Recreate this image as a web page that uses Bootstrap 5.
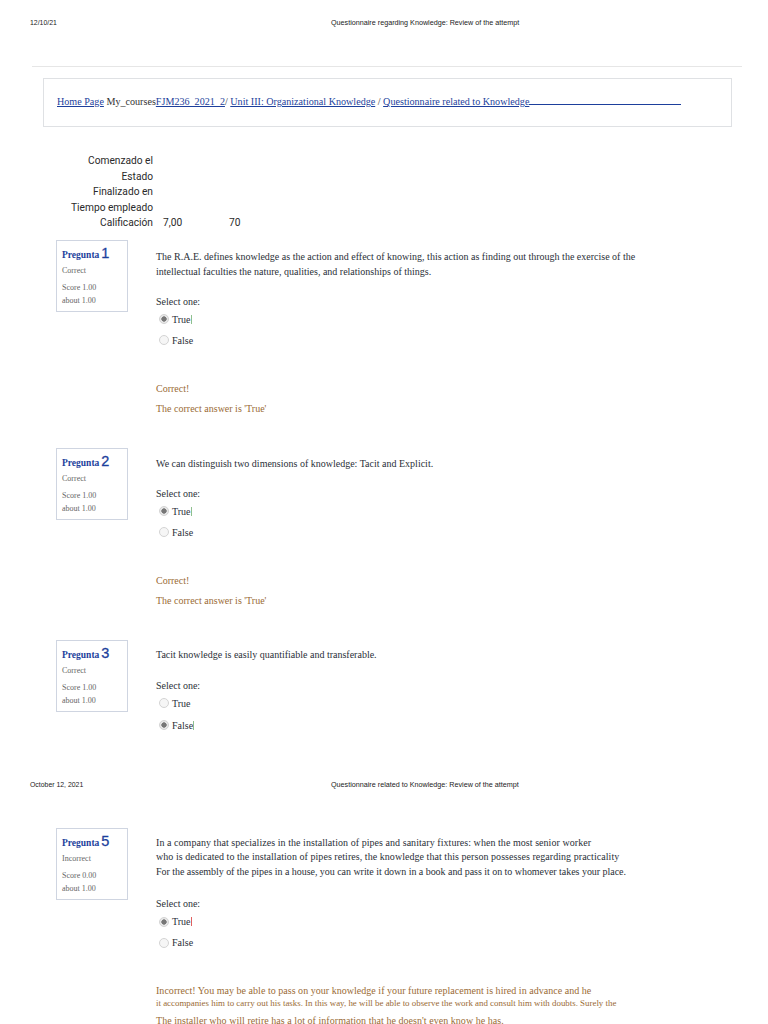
<!DOCTYPE html>
<html lang="en">
<head>
<meta charset="utf-8">
<title>Questionnaire</title>
<link href="https://cdn.jsdelivr.net/npm/bootstrap@5.3.0/dist/css/bootstrap.min.css" rel="stylesheet">
<style>
html,body{height:1024px;overflow:hidden;background:#fff}
body{font-family:"Liberation Serif",serif;font-size:10px;line-height:15px;color:#2b3038;position:relative}
.runhead{font-family:"Liberation Sans",sans-serif;font-size:6.9px;line-height:10px;color:#222;padding:0 30px;height:10px}
.runhead .rh-title{position:absolute;left:331px;font-size:7.2px}
.page-a{padding-top:18px}
.rule{height:1px;background:#e6e6e6;margin:38px 26px 0 32px}
.crumbbox{margin:11px 36px 0 43px;height:49px;border:1px solid #dfe1e4;padding:15px 13px 0}
.crumbs{font-size:10.12px;line-height:14px;color:#333;white-space:nowrap}
.crumbs a{color:#1d3f9c;text-decoration:underline}
.crumbs .tail{display:inline-block;width:152px;border-bottom:1px solid #1d3f9c;height:11px}
.summary{margin:26px 0 0 60px;font-family:Roboto,sans-serif;font-size:10.2px;line-height:15.5px;color:#2a2a2a;display:grid;grid-template-columns:93px 66px 40px}
.summary .lbl{text-align:right}
.summary .val{padding-left:10px}
.qrow{display:flex;margin-left:56px}
.qinfo{flex:0 0 72px;height:72px;border:1px solid #cfd5e1;padding:4px 5px;font-size:8px;line-height:12.5px;color:#666}
.qname{display:flex;align-items:baseline;gap:2px;font-size:9.5px;font-weight:700;color:#1d3f9c;line-height:17px;margin-bottom:1px}
.qname b{font-family:"Liberation Sans",sans-serif;font-size:14.5px;font-weight:400;-webkit-text-stroke:.3px #1d3f9c}
.qstate{margin-bottom:5px}
.qbody{margin-left:28px;flex:1}
.qtext{margin:0;padding-top:9px;white-space:nowrap}
.qsel{margin:15px 0 0}
.opt{display:flex;align-items:center;gap:3px;height:15px;margin-left:3px;margin-top:6px;color:#2b3038}
.opt:first-of-type{margin-top:3px}
.opt input.form-check-input{width:10px;height:10px;margin:0;border-color:#d4d4d4;background-color:#f6f6f6;float:none;flex:none}
.opt input.form-check-input:checked{background-color:#eee;background-image:radial-gradient(circle,#777 0,#777 42%,#e8e8e8 52%);border-color:#d4d4d4}
.opt .mark-g{border-right:1px solid #8fbf8f;height:9px;margin-left:-3px}
.opt .mark-r{border-right:1px solid #e06060;height:9px;margin-left:-3px}
.fb{color:#9a6b35;margin:0}
.fb1{margin-top:33px}
.fb2{margin-top:5px}
.q1{margin-top:9px}
.q2{margin-top:32px}
.q2 .qtext{padding-top:8px}
.q3{margin-top:32px}
.q3 .qtext{padding-top:7px}
.q3 .qsel{margin-top:16px}
.q3 .opt:last-child{margin-top:7px}
.page-b{margin-top:47px}
.q5{margin-top:38px}
.q5 .qtext{padding-top:8px;line-height:14.5px}
.q5 .qsel{margin-top:17px}
.fb-l{white-space:nowrap;margin:0;color:#9a6b35}
.fb-first{margin-top:35px;line-height:12px;letter-spacing:.03px}
.fb-s{font-size:8.9px;line-height:12px}
.fb-last{margin-top:5px;line-height:14px;letter-spacing:.04px}
.wide{letter-spacing:.05px}
.narrow{letter-spacing:-.04px}
</style>
</head>
<body>
<div class="page-a">
  <div class="runhead"><span>12/10/21</span><span class="rh-title">Questionnaire regarding Knowledge: Review of the attempt</span></div>
  <div class="rule"></div>
  <div class="crumbbox">
    <div class="crumbs"><a href="#">Home Page</a> My_courses<a href="#">FJM236_2021_2</a>/ <a href="#">Unit III: Organizational Knowledge</a> / <a href="#">Questionnaire related to Knowledge</a><span class="tail"></span></div>
  </div>
  <div class="summary">
    <div class="lbl">Comenzado el</div><div></div><div></div>
    <div class="lbl">Estado</div><div></div><div></div>
    <div class="lbl">Finalizado en</div><div></div><div></div>
    <div class="lbl">Tiempo empleado</div><div></div><div></div>
    <div class="lbl">Calificación</div><div class="val">7,00</div><div class="val">70</div>
  </div>

  <div class="qrow q1">
    <div class="qinfo"><div class="qname">Pregunta <b>1</b></div><div class="qstate">Correct</div><div>Score 1.00</div><div>about 1.00</div></div>
    <div class="qbody">
      <p class="qtext">The R.A.E. defines knowledge as the action and effect of knowing, this action as finding out through the exercise of the<br>intellectual faculties the nature, qualities, and relationships of things.</p>
      <p class="qsel">Select one:</p>
      <label class="opt"><input class="form-check-input" type="radio" name="a1" checked><span>True</span><span class="mark-g"></span></label>
      <label class="opt"><input class="form-check-input" type="radio" name="a1"><span>False</span></label>
      <p class="fb fb1">Correct!</p>
      <p class="fb fb2">The correct answer is 'True'</p>
    </div>
  </div>

  <div class="qrow q2">
    <div class="qinfo"><div class="qname">Pregunta <b>2</b></div><div class="qstate">Correct</div><div>Score 1.00</div><div>about 1.00</div></div>
    <div class="qbody">
      <p class="qtext">We can distinguish two dimensions of knowledge: Tacit and Explicit.</p>
      <p class="qsel">Select one:</p>
      <label class="opt"><input class="form-check-input" type="radio" name="a2" checked><span>True</span><span class="mark-g"></span></label>
      <label class="opt"><input class="form-check-input" type="radio" name="a2"><span>False</span></label>
      <p class="fb fb1">Correct!</p>
      <p class="fb fb2">The correct answer is 'True'</p>
    </div>
  </div>

  <div class="qrow q3">
    <div class="qinfo"><div class="qname">Pregunta <b>3</b></div><div class="qstate">Correct</div><div>Score 1.00</div><div>about 1.00</div></div>
    <div class="qbody">
      <p class="qtext">Tacit knowledge is easily quantifiable and transferable.</p>
      <p class="qsel">Select one:</p>
      <label class="opt"><input class="form-check-input" type="radio" name="a3"><span>True</span></label>
      <label class="opt"><input class="form-check-input" type="radio" name="a3" checked><span>False</span><span class="mark-g"></span></label>
    </div>
  </div>
</div>

<div class="page-b">
  <div class="runhead"><span>October 12, 2021</span><span class="rh-title">Questionnaire related to Knowledge: Review of the attempt</span></div>
  <div class="qrow q5">
    <div class="qinfo"><div class="qname">Pregunta <b>5</b></div><div class="qstate">Incorrect</div><div>Score 0.00</div><div>about 1.00</div></div>
    <div class="qbody">
      <p class="qtext"><span class="wide">In a company that specializes in the installation of pipes and sanitary fixtures: when the most senior worker</span><br><span class="wide">who is dedicated to the installation of pipes retires, the knowledge that this person possesses regarding practicality</span><br><span class="narrow">For the assembly of the pipes in a house, you can write it down in a book and pass it on to whomever takes your place.</span></p>
      <p class="qsel">Select one:</p>
      <label class="opt"><input class="form-check-input" type="radio" name="a5" checked><span>True</span><span class="mark-r"></span></label>
      <label class="opt"><input class="form-check-input" type="radio" name="a5"><span>False</span></label>
      <p class="fb-l fb-first">Incorrect! You may be able to pass on your knowledge if your future replacement is hired in advance and he</p>
      <p class="fb-l fb-s">it accompanies him to carry out his tasks. In this way, he will be able to observe the work and consult him with doubts. Surely the</p>
      <p class="fb-l fb-last">The installer who will retire has a lot of information that he doesn't even know he has.</p>
    </div>
  </div>
</div>
<script src="https://cdn.jsdelivr.net/npm/bootstrap@5.3.0/dist/js/bootstrap.bundle.min.js"></script>
</body>
</html>
